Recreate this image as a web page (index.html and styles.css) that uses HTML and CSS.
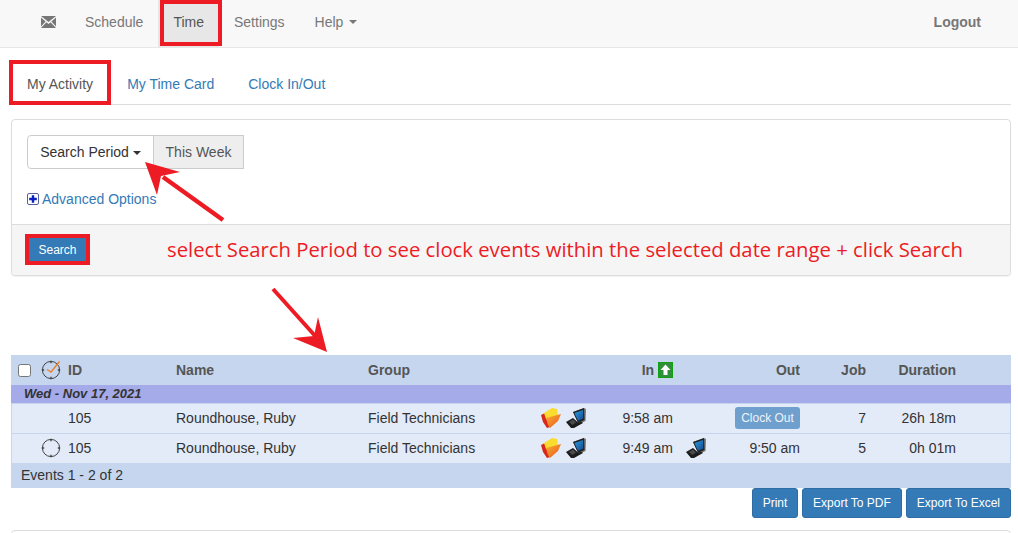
FILE: index.html
```html
<!DOCTYPE html>
<html lang="en">
<head>
<meta charset="utf-8">
<title>My Activity</title>
<link rel="stylesheet" href="styles.css">
</head>
<body>
<svg class="defs" width="0" height="0" aria-hidden="true">
  <defs>
    <linearGradient id="fg" x1="0" y1="0" x2="1" y2="1"><stop offset="0" stop-color="#f9b233"/><stop offset="1" stop-color="#e8541c"/></linearGradient>
    <linearGradient id="sc" x1="0" y1="0" x2="1" y2="1"><stop offset="0" stop-color="#2a9fe0"/><stop offset="1" stop-color="#14458f"/></linearGradient>
    <symbol id="folder" viewBox="0 0 20 20">
      <path d="M0 7 L4 5 L9 19 L6 20 L2 14 Z" fill="#d8271c"/>
      <path d="M3 5 L11 0 L16 1 L17 8 L9 13 L5 11 Z" fill="#f9dc2e"/>
      <path d="M5 10 L20 6 L17 13 L9 20 L7 17 Z" fill="url(#fg)"/>
    </symbol>
    <symbol id="laptop" viewBox="0 0 20 20">
      <path d="M7 4 L18 0 L20 1 L19.500 13 L13 16 Z" fill="#777"/>
      <path d="M7 4 L18 0 L18.500 12 L12 15 Z" fill="#222"/>
      <path d="M8.500 5 L17 2 L17.300 10.600 L12 12.800 Z" fill="url(#sc)"/>
      <path d="M0 14 L7 10 L12 14.500 L16 14 L17 15 L8 20 L5 20 Z" fill="#1c1c1c"/>
      <path d="M3 14 L7 11.500 L10 14.500 L6.500 17 Z" fill="#4a4a4a"/>
    </symbol>
    <symbol id="dial" viewBox="0 0 20 20">
      <circle cx="10" cy="10" r="8.600" fill="none" stroke="#444" stroke-width="1"/>
      <path d="M10 .8V3.200M10 16.800V19.200M.8 10H3.200M16.800 10H19.200" stroke="#444" stroke-width="1.400"/>
    </symbol>
  </defs>
</svg>

<nav class="navbar">
  <ul class="nav-list">
    <li><a class="nav-link nav-icon" href="#"><svg width="15" height="12" viewBox="0 0 15 12"><path d="M0 0H15L7.500 6Z M0 1.600V10.400L4.600 5.400Z M15 1.600V10.400L10.400 5.400Z M0 12L5.400 6.200L7.500 8L9.600 6.200L15 12Z" fill="#777"/></svg></a></li>
    <li><a class="nav-link" href="#">Schedule</a></li>
    <li><a class="nav-link active" href="#">Time</a></li>
    <li><a class="nav-link" href="#">Settings</a></li>
    <li><a class="nav-link" href="#">Help <span class="caret"></span></a></li>
  </ul>
  <a class="nav-link logout" href="#">Logout</a>
</nav>

<ul class="tabs">
  <li><a class="tab current" href="#">My Activity</a></li>
  <li><a class="tab" href="#">My Time Card</a></li>
  <li><a class="tab" href="#">Clock In/Out</a></li>
</ul>

<section class="panel">
  <div class="panel-body">
    <div class="input-group">
      <button class="period-btn" type="button">Search Period <span class="caret dark"></span></button>
      <span class="addon">This Week</span>
    </div>
    <div class="advanced">
      <svg width="12" height="12" viewBox="0 0 12 12"><rect x=".5" y=".5" width="11" height="11" rx="1.500" fill="#fff" stroke="#55609f"/><path d="M6 2.200V9.800M2.200 6H9.800" stroke="#0a1fc0" stroke-width="2.400"/></svg>
      <a href="#">Advanced Options</a>
    </div>
  </div>
  <div class="panel-footer">
    <button class="btn search-btn" type="button">Search</button>
    <p class="note">select Search Period to see clock events within the selected date range + click Search</p>
  </div>
</section>

<table class="events">
  <colgroup>
    <col class="c-sel"><col class="c-id"><col class="c-name"><col class="c-group"><col class="c-src"><col class="c-in"><col class="c-out"><col class="c-job"><col class="c-dur"><col class="c-end">
  </colgroup>
  <thead>
    <tr class="head">
      <th class="sel"><span class="checkbox"></span><svg class="dial" width="20" height="20" viewBox="0 0 20 20"><use href="#dial"/><path d="M6 9.500L10 12L18.500 1.500" fill="none" stroke="#ee7f22" stroke-width="1.400"/></svg></th>
      <th>ID</th><th>Name</th><th>Group</th><th></th>
      <th class="num">In <svg class="sort" width="15" height="16" viewBox="0 0 15 16"><rect width="15" height="16" fill="#0fa10f"/><rect x="1" y="1" width="13" height="14" fill="#2f8f3a"/><path d="M7.500 2.500L12.500 8H9.500V13H5.500V8H2.500Z" fill="#fff"/></svg></th>
      <th class="num">Out</th><th class="num">Job</th><th class="num">Duration</th><th></th>
    </tr>
  </thead>
  <tbody>
    <tr class="group-row"><td colspan="10">Wed - Nov 17, 2021</td></tr>
    <tr class="row">
      <td class="sel"></td><td>105</td><td>Roundhouse, Ruby</td><td>Field Technicians</td>
      <td class="src"><svg width="20" height="20"><use href="#folder"/></svg><svg width="20" height="20"><use href="#laptop"/></svg></td>
      <td class="num">9:58 am</td>
      <td class="num"><button class="clock-out" type="button">Clock Out</button></td>
      <td class="num">7</td><td class="num">26h 18m</td><td></td>
    </tr>
    <tr class="row">
      <td class="sel"><svg class="dial" width="20" height="20"><use href="#dial"/></svg></td><td>105</td><td>Roundhouse, Ruby</td><td>Field Technicians</td>
      <td class="src"><svg width="20" height="20"><use href="#folder"/></svg><svg width="20" height="20"><use href="#laptop"/></svg></td>
      <td class="num">9:49 am</td>
      <td class="num out-cell"><svg class="out-icon" width="20" height="20"><use href="#laptop"/></svg><span>9:50 am</span></td>
      <td class="num">5</td><td class="num">0h 01m</td><td></td>
    </tr>
  </tbody>
  <tfoot>
    <tr class="foot"><td colspan="10">Events 1 - 2 of 2</td></tr>
  </tfoot>
</table>

<div class="actions">
  <button class="btn print-btn" type="button">Print</button>
  <button class="btn" type="button">Export To PDF</button>
  <button class="btn" type="button">Export To Excel</button>
</div>

<div class="next-panel"></div>

<div class="annotations" aria-hidden="true">
  <div class="box box-time"></div>
  <div class="box box-tab"></div>
  <div class="box box-search"></div>
  <svg class="arrows" width="1018" height="533" viewBox="0 0 1018 533">
    <path d="M223 220L163 177" stroke="#ed1c24" stroke-width="4.500" fill="none"/>
    <path d="M145 162L180 172L161 176L157 195Z" fill="#ed1c24"/>
    <path d="M273 289L317 338" stroke="#ed1c24" stroke-width="4" fill="none"/>
    <path d="M327 352L293 338L314 336L318 317Z" fill="#ed1c24"/>
  </svg>
</div>
</body>
</html>
```

FILE: styles.css
```css
* { box-sizing: border-box; }
html, body { height: 100%; }
body {
  margin: 0;
  position: relative;
  overflow: hidden;
  background: #fff;
  color: #333;
  font: 14px/20px "Liberation Sans", Arial, sans-serif;
}
a { color: #337ab7; text-decoration: none; }
ul { list-style: none; margin: 0; padding: 0; }
p { margin: 0; }
button { font-family: inherit; }
.defs { position: absolute; }

.navbar {
  display: flex;
  justify-content: space-between;
  height: 48px;
  padding: 0 22px 0 26px;
  background: #f8f8f8;
  border-bottom: 1px solid #e7e7e7;
}
.nav-list { display: flex; }
.nav-link {
  display: flex;
  align-items: center;
  gap: 5px;
  height: 47px;
  padding: 0 15px 4px;
  color: #777;
}
.nav-list li:nth-child(2) .nav-link { padding-left: 14px; }
.nav-icon svg { display: block; }
.nav-link.active { background: #e7e7e7; color: #555; }
.logout { font-weight: 700; }
.caret {
  display: inline-block;
  width: 0;
  height: 0;
  margin-left: 1px;
  border-top: 4px solid #777;
  border-left: 4px solid transparent;
  border-right: 4px solid transparent;
}
.caret.dark { margin-left: 0; border-top-color: #333; vertical-align: middle; }

.tabs {
  display: flex;
  gap: 2px;
  height: 57px;
  margin: 0 7px 14px 11px;
  padding-top: 12px;
  border-bottom: 1px solid #ddd;
}
.tab {
  display: block;
  padding: 14px 16px 10px;
}
.tab.current { color: #555; }

.panel {
  margin: 0 7px 0 11px;
  height: 157px;
  background: #fff;
  border: 1px solid #ddd;
  border-radius: 4px;
  box-shadow: 0 1px 1px rgba(0, 0, 0, .05);
}
.panel-body { height: 104px; padding: 15px; }
.input-group { display: flex; height: 34px; }
.period-btn {
  width: 127px;
  padding: 0;
  background: #fff;
  border: 1px solid #ccc;
  border-radius: 4px 0 0 4px;
  color: #333;
  font-size: 14px;
}
.addon {
  display: flex;
  align-items: center;
  justify-content: center;
  width: 91px;
  margin-left: -1px;
  background: #eee;
  border: 1px solid #ccc;
  color: #555;
}
.advanced {
  display: flex;
  align-items: center;
  gap: 3px;
  margin-top: 20px;
}
.panel-footer {
  display: flex;
  align-items: center;
  height: 51px;
  padding: 0 15px;
  background: #f5f5f5;
  border-top: 1px solid #ddd;
  border-radius: 0 0 3px 3px;
}
.btn {
  height: 30px;
  padding: 0 10px;
  background: #337ab7;
  border: 1px solid #2e6da4;
  border-radius: 3px;
  color: #fff;
  font-size: 12px;
}
.print-btn { width: 46px; padding: 0; }
.search-btn { width: 61px; height: 26px; padding: 0; border-radius: 0; }
.note {
  margin-left: 79px;
  padding-bottom: 2px;
  color: #ed1c24;
  font: 20.300px/28px "Open Sans", sans-serif;
  white-space: nowrap;
}

.events {
  width: 1000px;
  margin: 79px 7px 0 11px;
  table-layout: fixed;
  border-collapse: separate;
  border-spacing: 0;
  font-size: 14px;
}
.c-sel { width: 57px; }
.c-id { width: 108px; }
.c-name { width: 192px; }
.c-group { width: 173px; }
.c-src { width: 50px; }
.c-in { width: 82px; }
.c-out { width: 127px; }
.c-job { width: 66px; }
.c-dur { width: 90px; }
.c-end { width: 55px; }
.events th, .events td { padding: 0; text-align: left; white-space: nowrap; }
.events .num { text-align: right; }
.head { height: 30px; background: #c5d6ee; color: #555; }
.head th { font-weight: 700; }
.sel { padding-left: 7px !important; line-height: 0; }
.checkbox {
  display: inline-block;
  width: 13px;
  height: 13px;
  margin-right: 10px;
  background: #fff;
  border: 1px solid #767676;
  border-radius: 2.500px;
  vertical-align: middle;
}
.dial { vertical-align: middle; }
.row .dial { margin-left: 22px; }
.sort { vertical-align: -3px; }
.group-row { height: 18px; background: #a5aae8; }
.group-row td {
  padding-left: 13px !important;
  color: #333;
  font-size: 13px;
  font-weight: 700;
  font-style: italic;
  line-height: 16px;
}
.row { height: 30px; background: #e3eaf8; }
.row td { padding-bottom: 2px; border-top: 1px solid #c5d6ee; }
.row td:first-child { border-left: 1px solid #c5d6ee; }
.row td:last-child { border-right: 1px solid #c5d6ee; }
.src { line-height: 0; }
.src svg { vertical-align: middle; margin-right: 6px; }
.src svg + svg { margin-right: 0; margin-left: -1px; }
.clock-out {
  width: 65px;
  height: 22px;
  padding: 0;
  background: #6f9fcd;
  border: 0;
  border-radius: 3px;
  color: #eef2fa;
  font-size: 12px;
  vertical-align: middle;
}
.out-cell { position: relative; }
.out-icon { position: absolute; left: 13px; top: 4px; }
.foot { height: 25px; background: #c5d6ee; }
.foot td { padding: 0 0 2px 10px !important; }

.actions {
  display: flex;
  justify-content: flex-end;
  gap: 4px;
  margin: 0 7px 0 11px;
}
.next-panel {
  height: 20px;
  margin: 12px 7px 0 11px;
  border: 1px solid #ddd;
  border-radius: 4px;
}

.annotations { position: absolute; inset: 0; pointer-events: none; }
.arrows { position: absolute; left: 0; top: 0; }
.box { position: absolute; border: 4px solid #ed1c24; }
.box-time { left: 160px; top: 0; width: 62px; height: 46px; }
.box-tab { left: 9px; top: 60px; width: 102px; height: 45px; }
.box-search { left: 25px; top: 234px; width: 65px; height: 31px; }
```
